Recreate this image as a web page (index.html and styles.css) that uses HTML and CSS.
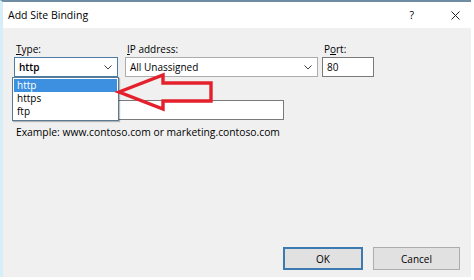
FILE: index.html
```html
<!DOCTYPE html>
<html lang="en">
<head>
    <meta charset="UTF-8">
    <title>Add Site Binding</title>
    <link rel="stylesheet" href="styles.css">
</head>
<body>

<div class="dialog">
    <div class="titlebar">
        <span class="title">Add Site Binding</span>
        <span class="help">?</span>
        <svg class="close" width="9" height="9" viewBox="0 0 9 9">
            <path d="M0.5 0.5 L8.5 8.5 M8.5 0.5 L0.5 8.5" stroke="#222" stroke-width="1" fill="none"/>
        </svg>
    </div>

    <div class="content">
        <div class="fields">
            <div class="field type-field">
                <label><u>T</u>ype:</label>
                <div class="combo focused">
                    <span class="value strong">http</span>
                    <svg class="chevron" width="8" height="5" viewBox="0 0 8 5"><path d="M0.5 0.5 L4 4 L7.5 0.5" stroke="#444" fill="none"/></svg>
                </div>
                <ul class="droplist">
                    <li class="selected">http</li>
                    <li>https</li>
                    <li>ftp</li>
                </ul>
            </div>
            <div class="field ip-field">
                <label><u>I</u>P address:</label>
                <div class="combo">
                    <span class="value">All Unassigned</span>
                    <svg class="chevron" width="8" height="5" viewBox="0 0 8 5"><path d="M0.5 0.5 L4 4 L7.5 0.5" stroke="#444" fill="none"/></svg>
                </div>
            </div>
            <div class="field port-field">
                <label>P<u>o</u>rt:</label>
                <div class="textbox"><span class="value">80</span></div>
            </div>
        </div>

        <!-- host name row, its label is covered by the open list -->
        <div class="host">
            <div class="spacer"></div>
            <div class="textbox"></div>
        </div>
        <p class="example">Example: www.contoso.com or marketing.contoso.com</p>

        <div class="buttons">
            <button class="btn default">OK</button>
            <button class="btn">Cancel</button>
        </div>
    </div>
</div>

<!-- red callout arrow drawn over the dialog -->
<svg class="callout" width="474" height="280" viewBox="0 0 474 280">
    <polygon points="119,92 163,75 163,83 211,83 211,101 163,101 163,109" fill="none" stroke="#e3202b" stroke-width="3.4" stroke-linejoin="miter"/>
</svg>

</body>
</html>
```

FILE: styles.css
```css
body {
    margin: 0;
    padding: 0;
    background-color: #fff;
    font-family: "Open Sans", "Noto Sans", Arial, sans-serif;
    font-size: 10px;
    color: #000;
    position: relative;
    width: 474px;
    height: 280px;
    overflow: hidden;
}
.dialog {
    width: 468px;
    height: 275px;
    border-top: 2px solid #6f8da2;
    border-left: 3px solid #d6eef8;
    display: flex;
    flex-direction: column;
    background-color: #f0f0f0;
}
.titlebar {
    height: 26px;
    background-color: #fff;
    display: flex;
    align-items: center;
    padding-left: 5px;
}
.title {
    font-size: 10.5px;
    flex: 1;
}
.help {
    font-size: 10.5px;
    margin-right: 37px;
}
.close {
    margin-right: 11px;
}
.content {
    flex: 1;
    display: flex;
    flex-direction: column;
    padding: 15px 11px 7px 9px;
}
.fields {
    display: flex;
    margin-left: 2px;
}
.field {
    display: flex;
    flex-direction: column;
    gap: 2px;
    position: relative;
}
.field label {
    line-height: 12px;
    padding-left: 2px;
}
.type-field {
    width: 104px;
}
.ip-field {
    width: 193px;
    margin-left: 7px;
}
.port-field {
    width: 52px;
    margin-left: 4px;
}
.combo, .textbox {
    height: 20px;
    box-sizing: border-box;
    border: 1px solid #7a7a7a;
    background-color: #fff;
    display: flex;
    align-items: center;
    padding-left: 4px;
}
.combo {
    border-color: #acacac;
}
.combo.focused {
    border-color: #4a7ca6;
}
.combo .value {
    flex: 1;
}
.value.strong {
    font-weight: 600;
}
.chevron {
    margin-right: 5px;
}
.droplist {
    position: absolute;
    top: 34px;
    left: -2px;
    width: 107px;
    height: 44px;
    box-sizing: border-box;
    margin: 0;
    padding: 1px 1px;
    list-style: none;
    background-color: #fff;
    border: 1px solid #5a7a94;
    box-shadow: 1px 1px 1px rgba(0, 0, 0, 0.25);
    z-index: 2;
}
.droplist li {
    height: 13px;
    line-height: 13px;
    padding-left: 3px;
}
.droplist li.selected {
    background-color: #3d8fe0;
    color: #fff;
}
.host {
    display: flex;
    flex-direction: column;
    gap: 2px;
    margin-top: 9px;
    width: 272px;
}
.host .spacer {
    height: 12px;
}
.example {
    margin: 6px 0 0 4px;
    line-height: 12px;
    font-size: 10.3px;
}
.buttons {
    margin-top: auto;
    display: flex;
    justify-content: flex-end;
    gap: 10px;
}
.btn {
    font-family: inherit;
    font-size: 10px;
    height: 23px;
    width: 87px;
    background-color: #e1e1e1;
    border: 1px solid #adadad;
    padding: 0;
}
.btn.default {
    width: 80px;
    border: 2px solid #3d7ab0;
}
.callout {
    position: absolute;
    left: 0;
    top: 0;
    pointer-events: none;
    z-index: 5;
}
```
